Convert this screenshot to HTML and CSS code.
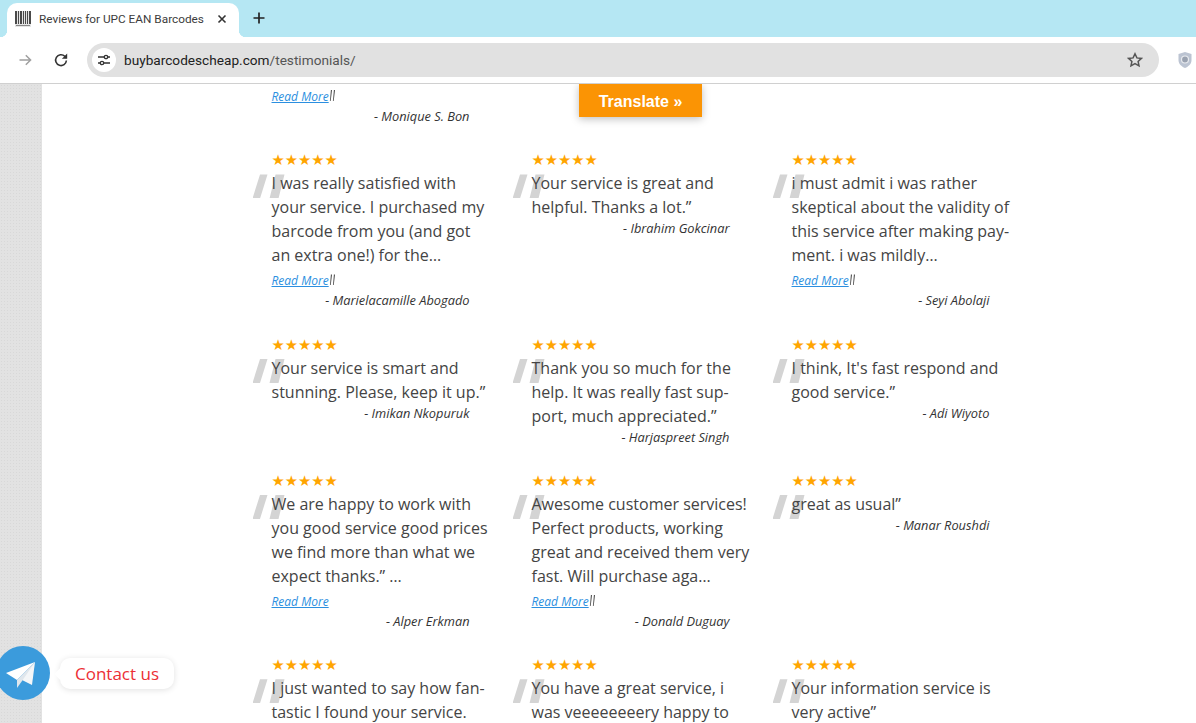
FILE: index.html
```html
<!DOCTYPE html>
<html lang="en">
<head>
    <meta charset="UTF-8">
    <meta name="viewport" content="width=device-width, initial-scale=1.0">
    <title>Reviews for UPC EAN Barcodes</title>
    <link rel="stylesheet" href="styles.css">
</head>
<body>
    <!-- Browser tab strip -->
    <div class="tab-strip">
        <div class="tab">
            <svg class="favicon" width="16" height="16" viewBox="0 0 16 16">
                <rect width="16" height="16" fill="#e4e4e4"/>
                <path d="M0 0h2v13H0zM3 0h1v13H3zM5 0h2v13H5zM8 0h1v13H8zM10 0h1v13h-1zM12 0h1v13h-1zM14 0h2v13h-2z" fill="#4a4a4a"/>
                <path d="M1 14h14v1H1z" fill="#888"/>
            </svg>
            <span class="tab-title">Reviews for UPC EAN Barcodes</span>
            <svg class="tab-close" width="10" height="10" viewBox="0 0 10 10">
                <path d="M1.500 1.500l7 7M8.500 1.500l-7 7" stroke="#333" stroke-width="1.600" fill="none"/>
            </svg>
        </div>
        <svg class="new-tab" width="12" height="12" viewBox="0 0 12 12">
            <path d="M6 .5v11M.5 6h11" stroke="#222" stroke-width="1.700" fill="none"/>
        </svg>
    </div>

    <!-- Address bar -->
    <div class="toolbar">
        <svg class="nav-icon" width="16" height="16" viewBox="0 0 16 16">
            <path d="M2.500 8h11M8.800 3.200L13.600 8l-4.800 4.800" stroke="#a0a0a0" stroke-width="1.500" fill="none"/>
        </svg>
        <svg class="nav-icon reload" width="16" height="16" viewBox="0 0 16 16">
            <path d="M13.400 8.500a5.400 5.400 0 1 1-1.600-4.200L13.400 6" stroke="#333" stroke-width="1.600" fill="none"/>
            <path d="M14.200 1.500v5.300H8.900z" fill="#333"/>
        </svg>
        <div class="omnibox">
            <span class="site-info">
                <svg width="14" height="14" viewBox="0 0 14 14">
                    <path d="M1 4h6M11 4h2M1 10h2M7 10h6" stroke="#333" stroke-width="1.400" fill="none"/>
                    <circle cx="9" cy="4" r="1.700" stroke="#333" stroke-width="1.300" fill="none"/>
                    <circle cx="5" cy="10" r="1.700" stroke="#333" stroke-width="1.300" fill="none"/>
                </svg>
            </span>
            <span class="url">buybarcodescheap.com<span class="url-path">/testimonials/</span></span>
            <svg class="star-icon" width="16" height="16" viewBox="0 0 16 16">
                <path d="M8 1.800l1.900 4.100 4.500.5-3.300 3 .9 4.400L8 11.600l-4 2.200.9-4.400-3.300-3 4.500-.5z" stroke="#555" stroke-width="1.500" fill="none"/>
            </svg>
        </div>
        <svg class="shield" width="16" height="18" viewBox="0 0 16 18">
            <path d="M8 1l6.500 2v6c0 4-3 6.500-6.500 8C4.500 15.500 1.500 13 1.500 9V3z" fill="#bcc4d2"/>
            <circle cx="8" cy="8.500" r="3.500" fill="#9aa2b0" stroke="#e8eaee" stroke-width="1.200"/>
        </svg>
    </div>

    <!-- Page viewport -->
    <div class="viewport">
        <div class="sidebar"></div>
        <div class="content">
            <div class="testimonials">
                <div class="review">
                    <div class="closing"><a class="read-more" href="#">Read More</a><i></i></div>
                    <div class="author">- Monique S. Bon</div>
                </div>
                <div class="review"></div>
                <div class="review"></div>

                <div class="review">
                    <div class="stars">★★★★★</div>
                    <p>I was really satisfied with your service. I purchased my barcode from you (and got an extra one!) for the…</p>
                    <div class="closing"><a class="read-more" href="#">Read More</a><i></i></div>
                    <div class="author">- Marielacamille Abogado</div>
                </div>
                <div class="review">
                    <div class="stars">★★★★★</div>
                    <p>Your service is great and helpful. Thanks a lot.”</p>
                    <div class="author">- Ibrahim Gokcinar</div>
                </div>
                <div class="review">
                    <div class="stars">★★★★★</div>
                    <p>i must admit i was rather skeptical about the validity of this service after making pay&shy;ment. i was mildly…</p>
                    <div class="closing"><a class="read-more" href="#">Read More</a><i></i></div>
                    <div class="author">- Seyi Abolaji</div>
                </div>

                <div class="review">
                    <div class="stars">★★★★★</div>
                    <p>Your service is smart and stunning. Please, keep it up.”</p>
                    <div class="author">- Imikan Nkopuruk</div>
                </div>
                <div class="review">
                    <div class="stars">★★★★★</div>
                    <p>Thank you so much for the help. It was really fast sup&shy;port, much appreciated.”</p>
                    <div class="author">- Harjaspreet Singh</div>
                </div>
                <div class="review">
                    <div class="stars">★★★★★</div>
                    <p>I think, It's fast respond and good service.”</p>
                    <div class="author">- Adi Wiyoto</div>
                </div>

                <div class="review">
                    <div class="stars">★★★★★</div>
                    <p>We are happy to work with you good service good prices we find more than what we expect thanks.” …</p>
                    <div class="closing"><a class="read-more" href="#">Read More</a></div>
                    <div class="author">- Alper Erkman</div>
                </div>
                <div class="review">
                    <div class="stars">★★★★★</div>
                    <p>Awesome customer services! Perfect products, working great and received them very fast. Will purchase aga…</p>
                    <div class="closing"><a class="read-more" href="#">Read More</a><i></i></div>
                    <div class="author">- Donald Duguay</div>
                </div>
                <div class="review">
                    <div class="stars">★★★★★</div>
                    <p>great as usual”</p>
                    <div class="author">- Manar Roushdi</div>
                </div>

                <div class="review">
                    <div class="stars">★★★★★</div>
                    <p>I just wanted to say how fan&shy;tastic I found your service.</p>
                </div>
                <div class="review">
                    <div class="stars">★★★★★</div>
                    <p>You have a great service, i was veeeeeeeery happy to</p>
                </div>
                <div class="review">
                    <div class="stars">★★★★★</div>
                    <p>Your information service is very active”</p>
                </div>
            </div>
        </div>

        <a class="translate-btn" href="#">Translate »</a>

        <div class="contact-widget">
            <span class="telegram">
                <svg width="54" height="54" viewBox="0 0 54 54">
                    <path d="M10 27L39 16 21 34z" fill="#fff"/>
                    <path d="M39 16L36 39 24 33z" fill="#f4f6f8"/>
                    <path d="M39 16L21 34v8l5-7z" fill="#dfe6ec"/>
                </svg>
            </span>
            <span class="contact-label">Contact us</span>
        </div>
    </div>
</body>
</html>
```

FILE: styles.css
```css
* {
    box-sizing: border-box;
}

html, body {
    height: 100%;
    overflow: hidden;
}

body {
    margin: 0;
    font-family: "Open Sans", Arial, sans-serif;
    background-color: #fff;
    color: #333;
}

/* Browser chrome */
.tab-strip {
    height: 37px;
    background-color: #b5e7f3;
    display: flex;
    align-items: flex-end;
    padding-left: 7px;
}

.tab {
    position: relative;
    width: 232px;
    height: 34px;
    background-color: #fff;
    border-radius: 10px 10px 0 0;
    display: flex;
    align-items: center;
    padding: 0 0 3px 8px;
}

/* Flared bottom corners of the active tab */
.tab::before,
.tab::after {
    content: "";
    position: absolute;
    bottom: 0;
    width: 7px;
    height: 7px;
}

.tab::before {
    left: -7px;
    background: radial-gradient(circle at 0 0, #b5e7f3 7px, #fff 7.5px);
}

.tab::after {
    right: -7px;
    background: radial-gradient(circle at 100% 0, #b5e7f3 7px, #fff 7.5px);
}

.favicon {
    flex-shrink: 0;
}

.tab-title {
    width: 165px;
    margin-left: 8px;
    font-family: Roboto, Arial, sans-serif;
    font-size: 11.8px;
    color: #3c3c3c;
    white-space: nowrap;
    overflow: hidden;
}

.tab-close {
    margin-left: 13px;
}

.new-tab {
    margin: 0 0 13px 14px;
}

.toolbar {
    height: 47px;
    background-color: #fff;
    border-bottom: 1px solid #d0d0d0;
    display: flex;
    align-items: center;
    padding-left: 17px;
}

.nav-icon {
    flex-shrink: 0;
}

.reload {
    margin-left: 20px;
}

.omnibox {
    width: 1072px;
    height: 34px;
    margin-left: 18px;
    border-radius: 17px;
    background-color: #e1e1e1;
    display: flex;
    align-items: center;
    padding: 0 16px 0 5px;
}

.site-info {
    width: 24px;
    height: 24px;
    border-radius: 50%;
    background-color: #fff;
    display: flex;
    align-items: center;
    justify-content: center;
}

.url {
    margin-left: 8px;
    font-family: Roboto, Arial, sans-serif;
    font-size: 13.65px;
    color: #222;
}

.url-path {
    color: #555;
}

.star-icon {
    margin-left: auto;
}

.shield {
    margin-left: 18px;
}

/* Page */
.viewport {
    position: relative;
    height: 639px;
    overflow: hidden;
    display: flex;
}

.sidebar {
    width: 42px;
    flex-shrink: 0;
    background-color: #e2e2e2;
    background-image: radial-gradient(#d8d8d8 0.5px, transparent 1px);
    background-size: 3px 3px;
}

.content {
    flex: 1;
    padding-left: 229.5px;
}

.testimonials {
    display: grid;
    grid-template-columns: repeat(3, 260px);
    margin-top: -1.1px;
}

.review {
    position: relative;
    width: 218px;
    padding-bottom: 22px;
}

.stars {
    height: 24px;
    font-family: "DejaVu Sans", sans-serif;
    font-size: 14.8px;
    line-height: 26px;
    color: #ffa500;
}

.review p {
    margin: 0;
    font-size: 16px;
    line-height: 24px;
    color: #444;
    hyphens: manual;
}

/* Big grey quote mark behind the text */
.stars::before {
    content: "";
    position: absolute;
    left: -19px;
    top: 27px;
    width: 32px;
    height: 24px;
    background-color: #d4d4d4;
    clip-path: path("M7.5 0H15L7.5 24H0Z M23 0H32L26 24H17Z");
    z-index: -1;
}

.closing {
    height: 23.9px;
    font-size: 12px;
    line-height: 28px;
    font-style: italic;
}

/* Thin closing quote after the link */
.closing i {
    display: inline-block;
    width: 6px;
    height: 11px;
    margin-left: 0;
    vertical-align: 0;
    background-color: #555;
    clip-path: path("M2.200 0H3.400L2 11H1.200Z M5.200 0H6.400L5 11H4.200Z");
}

.closing + .author {
    margin-bottom: 0.6px;
}

.read-more {
    color: #2b8fe0;
}

.author {
    margin-right: 20px;
    font-size: 12.8px;
    line-height: 18px;
    font-style: italic;
    text-align: right;
    color: #333;
}

/* Floating pieces */
.translate-btn {
    position: absolute;
    left: 579px;
    top: 0;
    width: 123px;
    height: 33px;
    background-color: #fb9404;
    color: #fff;
    font-family: "Liberation Sans", Arial, sans-serif;
    font-size: 16px;
    font-weight: bold;
    line-height: 35px;
    text-align: center;
    text-decoration: none;
    box-shadow: 0 2px 8px rgba(0, 0, 0, 0.25);
}

.contact-widget {
    position: absolute;
    left: -4px;
    top: 562px;
    display: flex;
    align-items: center;
}

.telegram {
    width: 54px;
    height: 54px;
    border-radius: 50%;
    background-color: #3b9bdc;
    display: flex;
}

.contact-label {
    position: relative;
    margin-left: 10px;
    padding: 0 15px;
    height: 31px;
    line-height: 31px;
    border-radius: 10px;
    background-color: #fff;
    color: #ec2f35;
    font-size: 17px;
    box-shadow: 0 1px 6px rgba(0, 0, 0, 0.12);
}

.contact-label::before {
    content: "";
    position: absolute;
    left: -4px;
    top: 12px;
    width: 8px;
    height: 8px;
    background-color: #fff;
    transform: rotate(45deg);
}
```
